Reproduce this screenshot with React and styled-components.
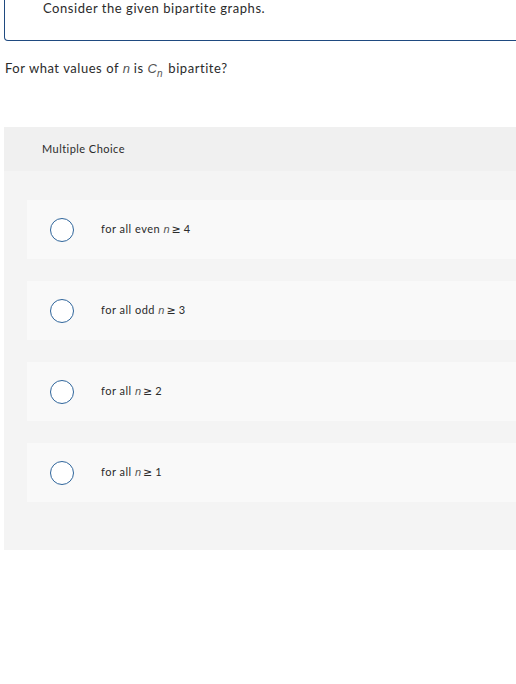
import React from "react";
import styled, { createGlobalStyle } from "styled-components";

const Global = createGlobalStyle`
  html, body { margin: 0; padding: 0; background: #fff; overflow: hidden; }
  body { font-family: Lato, "Open Sans", Arial, sans-serif; color: #333; }
`;

const Page = styled.div`
  width: 540px;
  padding-left: 4px;
`;

const PromptBox = styled.div`
  height: 41px;
  border: 1px solid #1f4a80;
  border-top: none;
  border-radius: 0 0 4px 4px;
  box-sizing: border-box;
  padding: 0 0 0 38px;
`;

const PromptText = styled.div`
  font-size: 13px;
  line-height: 16px;
  letter-spacing: 0.55px;
  color: #2b2b2b;
`;

const Question = styled.div`
  margin-top: 19px;
  padding-left: 1px;
  font-size: 13px;
  line-height: 16px;
  letter-spacing: 0.55px;
  color: #2b2b2b;
  height: 16px;
`;

const Var = styled.i`
  font-style: italic;
  font-family: "Liberation Sans", Arial, sans-serif;
  letter-spacing: 0;
  color: #555;
  margin-right: ${(p) => (p.$gap ? "2px" : "0")};
`;

const Sub = styled.sub`
  font-size: 10px;
  vertical-align: -4px;
  line-height: 0;
`;

const Rel = styled.span`
  font-family: "DejaVu Sans", "Liberation Sans", sans-serif;
  font-size: 11px;
  letter-spacing: 0;
  margin: 0 3px 0 2px;
`;

const Panel = styled.div`
  margin-top: 51px;
  background: #f4f4f4;
  padding-bottom: 48px;
`;

const PanelHeader = styled.div`
  height: 44px;
  background: #f0f0f0;
  display: flex;
  align-items: center;
  padding-left: 38px;
  padding-bottom: 1px;
  box-sizing: border-box;
  font-size: 11px;
  letter-spacing: 0.45px;
  color: #2b2b2b;
`;

const Options = styled.div`
  padding: 29px 0 0 23px;
  display: flex;
  flex-direction: column;
  gap: 22px;
`;

const Option = styled.div`
  height: 59px;
  background: #f9f9f9;
  display: flex;
  align-items: center;
  padding-left: 23px;
`;

const Radio = styled.span`
  width: 24px;
  height: 24px;
  box-sizing: border-box;
  border: 1.5px solid #2f659b;
  border-radius: 50%;
  background: #fff;
  flex: none;
`;

const Label = styled.span`
  margin-left: 27px;
  margin-bottom: 1px;
  font-size: 11px;
  letter-spacing: 0.5px;
  color: #2b2b2b;
`;

const options = [
  ["for all even ", "4"],
  ["for all odd ", "3"],
  ["for all ", "2"],
  ["for all ", "1"],
];

export default function App() {
  return (
    <>
      <Global />
      <Page>
        <PromptBox>
          <PromptText>Consider the given bipartite graphs.</PromptText>
        </PromptBox>
        <Question>
          For what values of <Var>n</Var> is <Var $gap>C<Sub>n</Sub></Var> bipartite?
        </Question>
        <Panel>
          <PanelHeader>Multiple Choice</PanelHeader>
          <Options>
            {options.map(([t, v], i) => (
              <Option key={i}>
                <Radio />
                <Label>
                  {t}
                  <Var>n</Var>
                  <Rel>≥</Rel>
                  {v}
                </Label>
              </Option>
            ))}
          </Options>
        </Panel>
      </Page>
    </>
  );
}
